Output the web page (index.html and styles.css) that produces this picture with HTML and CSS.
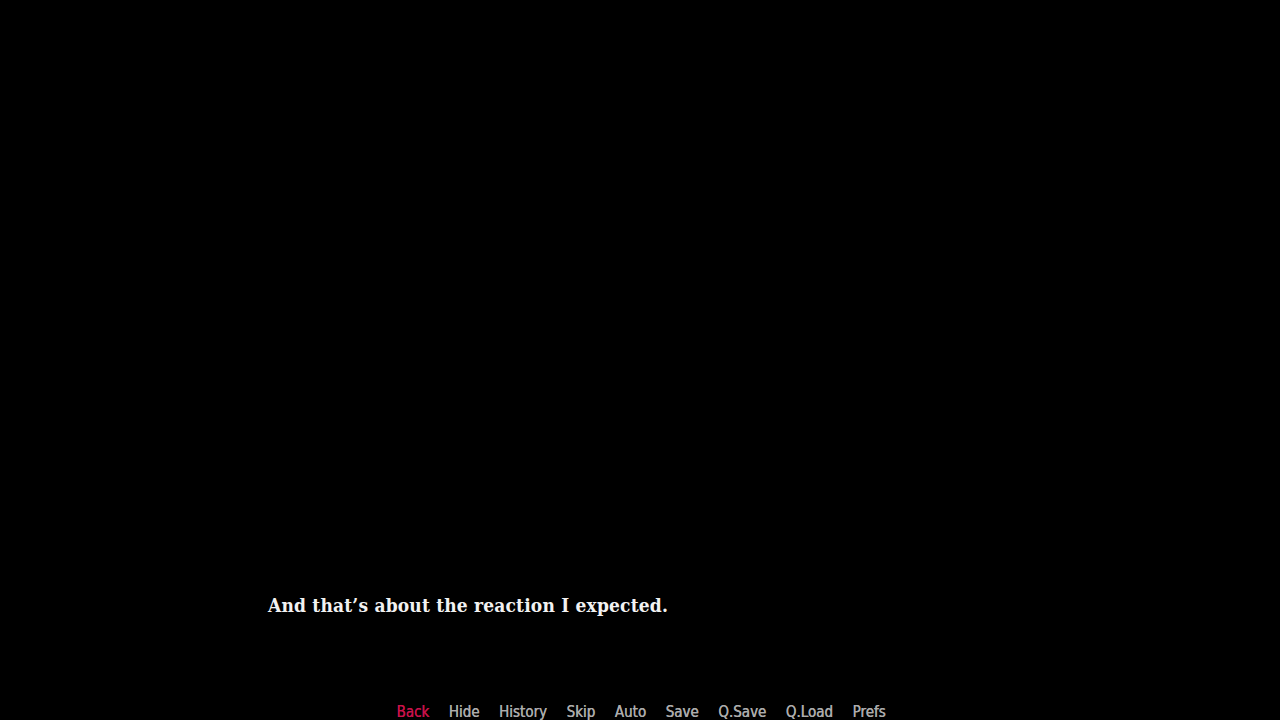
FILE: index.html
```html
<!DOCTYPE html>
<html>
<head>
<meta charset="utf-8">
<link rel="stylesheet" href="styles.css">
</head>
<body>
<div class="screen">
  <div class="stage"></div>
  <div class="say">
    <p class="what">And that’s about the reaction I expected.</p>
  </div>
  <nav class="quick">
    <span class="qbtn active">Back</span>
    <span class="qbtn">Hide</span>
    <span class="qbtn">History</span>
    <span class="qbtn">Skip</span>
    <span class="qbtn">Auto</span>
    <span class="qbtn">Save</span>
    <span class="qbtn">Q.Save</span>
    <span class="qbtn">Q.Load</span>
    <span class="qbtn">Prefs</span>
  </nav>
</div>
</body>
</html>
```
FILE: styles.css
```css
html, body {
  margin: 0;
  padding: 0;
  background: #000;
}
.screen {
  width: 1280px;
  height: 720px;
  background: #000;
  display: flex;
  flex-direction: column;
  overflow: hidden;
}
.stage {
  height: 590px;
  flex-shrink: 0;
}
.say {
  height: 112px;
  flex-shrink: 0;
  padding-left: 268px;
}
.what {
  margin: 0;
  font-family: "DejaVu Serif Condensed", "DejaVu Serif", serif;
  font-size: 19px;
  font-weight: bold;
  color: #f2f2f2;
  line-height: 30px;
  letter-spacing: 0.18px;
}
.quick {
  display: flex;
  flex-shrink: 0;
  justify-content: center;
  gap: 19.5px;
  padding-left: 2px;
}
.qbtn {
  font-family: "DejaVu Sans Condensed", "DejaVu Sans", sans-serif;
  font-size: 15px;
  color: #acacac;
  line-height: 20px;
  text-shadow: 0.4px 0 0 currentColor;
}
.qbtn.active {
  color: #c8124a;
}
```
